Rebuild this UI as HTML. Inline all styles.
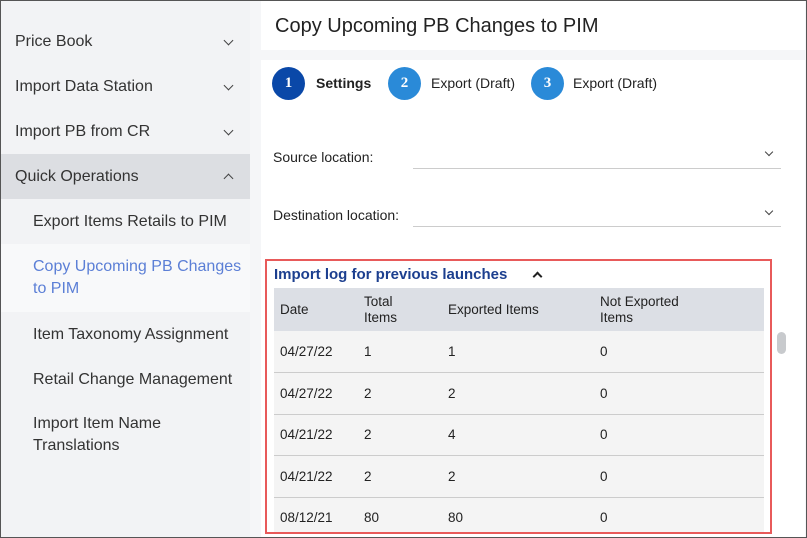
<!DOCTYPE html>
<html><head><meta charset="utf-8"><style>
*{margin:0;padding:0;box-sizing:border-box}
body{width:807px;height:538px;overflow:hidden;font-family:"Liberation Sans",Tahoma,sans-serif;background:#f5f6f8;position:relative;color:#222}
.frame{position:absolute;inset:0;border:1px solid #555;z-index:10;pointer-events:none}
.side{position:absolute;left:1px;top:1px;width:249px;height:536px;background:#f2f3f5}
.it{position:absolute;left:0;width:249px;height:45px;font-size:16px;color:#333;padding-left:14px;line-height:45px}
.chev{position:absolute;right:18px;top:18px;width:7px;height:7px;border-right:1.5px solid #444;border-bottom:1.5px solid #444;transform:rotate(45deg)}
.up{top:21px;transform:rotate(-135deg)}
.sub{padding-left:32px}
.head{position:absolute;left:261px;top:1px;width:544px;height:49px;background:#fff;font-size:20px;padding:14px 0 0 14px;color:#222}
.main{position:absolute;left:261px;top:60px;width:544px;height:477px;background:#fff}
.step{position:absolute;top:7px;width:33px;height:33px;border-radius:50%;color:#fff;font-weight:bold;font-size:15px;text-align:center;line-height:33px;font-family:"Liberation Serif",serif}
.sl{position:absolute;top:15px;font-size:14px}
.lbl{position:absolute;left:12px;font-size:14px}
.sel{position:absolute;left:152px;width:368px;border-bottom:1px solid #ccc;height:1px}
.sc{position:absolute;left:505px;width:6px;height:6px;border-right:1.5px solid #444;border-bottom:1.5px solid #444;transform:rotate(45deg)}
.box{position:absolute;left:265px;top:259px;width:507px;height:275px;border:2px solid #e85a5a;background:#fff;overflow:hidden}
.tt{position:absolute;left:7px;top:5px;font-size:15px;font-weight:bold;color:#1c3f8f}
table{position:absolute;left:7px;top:27px;width:490px;border-collapse:collapse;font-size:13.5px}
th{background:#dcdfe5;font-weight:normal;text-align:left;height:43px;padding-left:6px;line-height:16px;vertical-align:middle}
td{background:#f4f4f4;height:41.5px;padding-left:6px;border-bottom:1px solid #ccc}
</style></head><body>
<div class="frame"></div>
<div class="side">
<div class="it" style="top:18px">Price Book<span class="chev"></span></div>
<div class="it" style="top:63px">Import Data Station<span class="chev"></span></div>
<div class="it" style="top:108px">Import PB from CR<span class="chev"></span></div>
<div class="it" style="top:153px;background:#dcdee2">Quick Operations<span class="chev up"></span></div>
<div class="it sub" style="top:198px">Export Items Retails to PIM</div>
<div class="it sub" style="top:243px;height:68px;background:#f8f9fa;color:#5b7fd6;line-height:22px;padding-top:12px">Copy Upcoming PB Changes<br>to PIM</div>
<div class="it sub" style="top:311px">Item Taxonomy Assignment</div>
<div class="it sub" style="top:356px">Retail Change Management</div>
<div class="it sub" style="top:401px;height:68px;line-height:22px;padding-top:11px">Import Item Name<br>Translations</div>
</div>
<div class="head">Copy Upcoming PB Changes to PIM</div>
<div class="main">
<div class="step" style="left:11px;background:#0a48a8">1</div><div class="sl" style="left:55px;font-weight:bold">Settings</div>
<div class="step" style="left:127px;background:#2a8ad8">2</div><div class="sl" style="left:170px">Export (Draft)</div>
<div class="step" style="left:270px;background:#2a8ad8">3</div><div class="sl" style="left:312px">Export (Draft)</div>
<div class="lbl" style="top:89px">Source location:</div><div class="sel" style="top:108px"></div><div class="sc" style="top:89px"></div>
<div class="lbl" style="top:147px">Destination location:</div><div class="sel" style="top:166px"></div><div class="sc" style="top:148px"></div>
<div style="position:absolute;left:516px;top:272px;width:9px;height:22px;border-radius:5px;background:#c8cacd"></div>
</div>
<div class="box">
<div class="tt">Import log for previous launches <span style="display:inline-block;margin-left:22px;width:7px;height:7px;border-left:2.5px solid #222;border-top:2.5px solid #222;transform:rotate(45deg);position:relative;top:1px"></span></div>
<table>
<tr><th style="width:84px">Date</th><th style="width:84px">Total<br>Items</th><th style="width:152px">Exported Items</th><th>Not Exported<br>Items</th></tr>
<tr><td>04/27/22</td><td>1</td><td>1</td><td>0</td></tr>
<tr><td>04/27/22</td><td>2</td><td>2</td><td>0</td></tr>
<tr><td>04/21/22</td><td>2</td><td>4</td><td>0</td></tr>
<tr><td>04/21/22</td><td>2</td><td>2</td><td>0</td></tr>
<tr><td>08/12/21</td><td>80</td><td>80</td><td>0</td></tr>
</table>
</div>
</body></html>
